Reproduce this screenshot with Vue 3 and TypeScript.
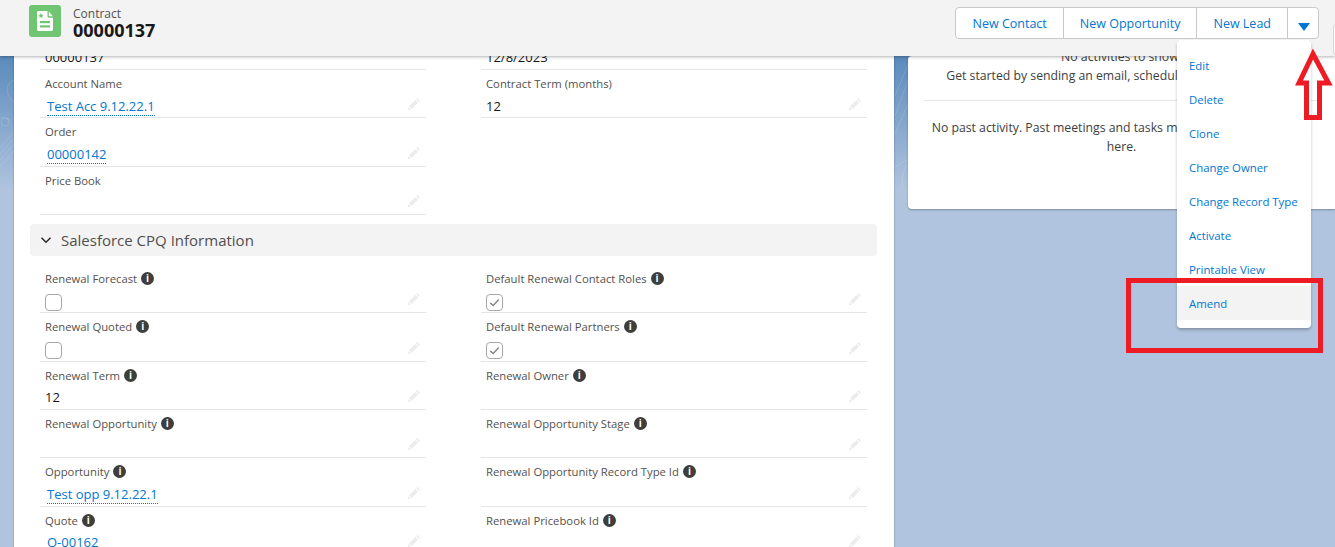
<script setup lang="ts">
interface Field {
  label: string
  value?: string
  link?: boolean
  info?: boolean
  check?: 'on' | 'off'
}

const topLeft: Field[] = [
  { label: 'Account Name', value: 'Test Acc 9.12.22.1', link: true },
  { label: 'Order', value: '00000142', link: true },
  { label: 'Price Book' },
]
const topRight: Field[] = [{ label: 'Contract Term (months)', value: '12' }]

const cpqLeft: Field[] = [
  { label: 'Renewal Forecast', info: true, check: 'off' },
  { label: 'Renewal Quoted', info: true, check: 'off' },
  { label: 'Renewal Term', info: true, value: '12' },
  { label: 'Renewal Opportunity', info: true },
  { label: 'Opportunity', info: true, value: 'Test opp 9.12.22.1', link: true },
  { label: 'Quote', info: true, value: 'Q-00162', link: true },
]
const cpqRight: Field[] = [
  { label: 'Default Renewal Contact Roles', info: true, check: 'on' },
  { label: 'Default Renewal Partners', info: true, check: 'on' },
  { label: 'Renewal Owner', info: true },
  { label: 'Renewal Opportunity Stage', info: true },
  { label: 'Renewal Opportunity Record Type Id', info: true },
  { label: 'Renewal Pricebook Id', info: true },
]

const columns = [cpqLeft, cpqRight]
const actions = ['New Contact', 'New Opportunity', 'New Lead']
const menu = ['Edit', 'Delete', 'Clone', 'Change Owner', 'Change Record Type', 'Activate', 'Printable View', 'Amend']
</script>

<template>
  <div class="page">
    <!-- faint contour lines of the page backdrop -->
    <svg class="backdrop" viewBox="0 0 908 130" width="908" height="130">
      <g fill="none" stroke="#fff" stroke-opacity="0.16" stroke-width="0.8">
        <path d="M14 24c-6 2-8 8-6 14s4 7 6 8" />
        <path d="M0 62c4-1 7 0 10 3" />
        <circle cx="5" cy="66" r="4" />
        <path d="M0 92 14 76M0 98 14 82M0 104 14 88M0 110 14 95" />
        <path d="M895 40 908 8M895 60 908 24M895 78 908 48" />
        <path d="M895 112c4-4 8-7 13-8M903 130c-2-8 0-16 5-22" />
      </g>
    </svg>

    <header class="highlights">
      <div class="record">
        <span class="record-icon">
          <svg viewBox="0 0 32 32" width="32" height="32">
            <path fill="#fff" d="M9.500 6H18.500V11c0 1 .8 1.800 1.800 1.800H24V24.200c0 1-.8 1.800-1.800 1.800H9.800c-1 0-1.800-.8-1.800-1.800V7.500C8 6.700 8.700 6 9.500 6z" />
            <path fill="#fff" d="M19.800 6.300 23.800 11.300H19.800z" />
            <path fill="#6fc572" d="m12 8 .8 1.700 1.800.2-1.300 1.200.4 1.800-1.700-.9-1.700.9.400-1.800-1.300-1.200 1.800-.2z" />
            <rect x="11" y="16" width="10" height="2.200" fill="#6fc572" />
            <rect x="11" y="20.300" width="10" height="2.200" fill="#6fc572" />
          </svg>
        </span>
        <div class="record-text">
          <div class="record-type">Contract</div>
          <div class="record-name">00000137</div>
        </div>
      </div>
      <div class="actions">
        <button v-for="a in actions" :key="a" class="action">{{ a }}</button>
        <button class="action more"><span class="caret"></span></button>
      </div>
    </header>

    <div class="layout">
      <main class="detail">
        <div class="cut-row">
          <div class="cut-cell"><span class="plain">00000137</span></div>
          <div class="cut-cell"><span class="plain">12/8/2023</span></div>
        </div>
        <div class="grid">
          <div v-for="(col, i) in [topLeft, topRight]" :key="i" class="col">
            <div v-for="f in col" :key="f.label" class="field">
              <div class="label">{{ f.label }}</div>
              <div class="value">
                <a v-if="f.link" class="link">{{ f.value }}</a>
                <span v-else class="plain">{{ f.value }}</span>
              </div>
              <svg class="pencil" viewBox="0 0 14 14" width="14" height="14">
                <path fill="#ececec" d="M10.300 1 13 3.700 11.800 4.900 9.100 2.200zM8.400 2.900l2.700 2.700-6.400 6.400L2 9.300zM1.500 10l2.500 2.500-3.200.7z" />
              </svg>
            </div>
          </div>
        </div>

        <div class="section">
          <svg viewBox="0 0 12 12" width="12" height="12">
            <path fill="none" stroke="#2b2826" stroke-width="1.500" d="M1.500 3.800 6 8.300l4.500-4.500" />
          </svg>
          <span>Salesforce CPQ Information</span>
        </div>

        <div class="grid">
          <div v-for="(col, i) in columns" :key="i" class="col">
            <div v-for="f in col" :key="f.label" class="field">
              <div class="label">
                {{ f.label }}
                <span v-if="f.info" class="info">i</span>
              </div>
              <div class="value">
                <span v-if="f.check" class="checkbox">
                  <svg v-if="f.check === 'on'" viewBox="0 0 17 17" width="17" height="17">
                    <path fill="none" stroke="#8a8a8a" stroke-width="1.600" d="M4.200 8.900 7.200 11.500 12.800 5.500" />
                  </svg>
                </span>
                <a v-else-if="f.link" class="link">{{ f.value }}</a>
                <span v-else class="plain">{{ f.value }}</span>
              </div>
              <svg class="pencil" viewBox="0 0 14 14" width="14" height="14">
                <path fill="#ececec" d="M10.300 1 13 3.700 11.800 4.900 9.100 2.200zM8.400 2.900l2.700 2.700-6.400 6.400L2 9.300zM1.500 10l2.500 2.500-3.200.7z" />
              </svg>
            </div>
          </div>
        </div>
      </main>

      <aside class="activity">
        <p class="empty">No activities to show.<br />Get started by sending an email, scheduling a task, and more.</p>
        <hr />
        <p class="past">No past activity. Past meetings and tasks marked as Done show up here.</p>
      </aside>
    </div>

    <!-- dropdown opened from the caret button -->
    <ul class="menu">
      <li v-for="m in menu" :key="m" :class="{ hover: m === 'Amend' }">{{ m }}</li>
    </ul>

    <span class="edge"></span>

    <!-- red annotations drawn on top of the screenshot -->
    <svg class="mark-arrow" viewBox="0 0 42 76" width="42" height="76">
      <path fill="none" stroke="#ed1c24" stroke-width="5" d="M21 8 36.500 37H27.500V71.500H14.500V37H7z" />
    </svg>
    <div class="mark-box"></div>
  </div>
</template>

<style scoped>
.page {
  position: relative;
  width: 1335px;
  height: 547px;
  overflow: hidden;
  background: linear-gradient(#5a8abb 56px, #b0c4df 190px);
  font-family: "Open Sans", "Noto Sans", sans-serif;
  font-size: 11.3px;
  color: #54514e;
}

.backdrop {
  position: absolute;
  left: 0;
  top: 56px;
}

.highlights {
  position: relative;
  z-index: 2;
  height: 56px;
  display: flex;
  align-items: flex-start;
  justify-content: space-between;
  box-sizing: border-box;
  padding: 7px 16px 0 29px;
  background: #f3f3f3;
  box-shadow: 0 1px 3px rgba(0, 0, 0, 0.3);
}

.record {
  display: flex;
  gap: 12px;
}

.record-icon {
  width: 32px;
  height: 32px;
  margin-top: -2px;
  border-radius: 3px;
  background: #6fc572;
}

.record-icon svg {
  display: block;
}

.record-type {
  font-size: 12px;
  line-height: 14px;
  color: #54514e;
}

.record-name {
  font-size: 18px;
  font-weight: 700;
  line-height: 19px;
  color: #181818;
}

.actions {
  display: flex;
  height: 32px;
  box-sizing: border-box;
  border: 1px solid #c9c9c9;
  border-radius: 4px;
  background: #fff;
}

.action {
  padding: 0 16px;
  border: 0;
  border-left: 1px solid #c9c9c9;
  background: none;
  font: inherit;
  font-size: 12.5px;
  color: #0176d3;
}

.action:first-child {
  border-left: 0;
  padding-left: 17px;
}

.more {
  width: 31px;
  padding: 0;
  display: flex;
  align-items: center;
  justify-content: center;
}

.caret {
  margin: 7px 0 0 1px;
  border-left: 6px solid transparent;
  border-right: 6px solid transparent;
  border-top: 8px solid #0176d3;
}

.layout {
  position: relative;
  display: flex;
  align-items: flex-start;
  gap: 14px;
  padding-left: 14px;
}

.detail {
  width: 880px;
  flex: none;
  box-sizing: border-box;
  padding: 0 16px;
  background: #fff;
  box-shadow: 0 0 2px rgba(0, 0, 0, 0.3);
}

.cut-row {
  display: flex;
  gap: 55px;
  padding: 0 10px;
  height: 13px;
  overflow: hidden;
}

.cut-cell {
  width: 386px;
  box-sizing: border-box;
  margin-top: -8px;
  padding-left: 5px;
  height: 22px;
  font-size: 13px;
}

.grid {
  display: flex;
  gap: 55px;
  padding: 0 10px;
}

.col {
  width: 386px;
  border-top: 1px solid #e5e5e5;
}

.field {
  position: relative;
  height: 42.4px;
  padding: 5px 5px 0;
  border-bottom: 1px solid #e5e5e5;
}

.label {
  display: flex;
  align-items: center;
  gap: 4px;
  height: 17px;
  line-height: 17px;
  white-space: nowrap;
}

.info {
  width: 13px;
  height: 13px;
  border-radius: 50%;
  background: #3e3e3c;
  color: #fff;
  font-size: 10px;
  font-weight: 700;
  line-height: 13px;
  text-align: center;
}

.value {
  margin-top: 3.5px;
  height: 20px;
  line-height: 20px;
  font-size: 13px;
  white-space: nowrap;
}

.link {
  margin-left: 2px;
  color: #0176d3;
  border-bottom: 1px dotted #0176d3;
}

.plain {
  color: #181818;
}

.checkbox {
  display: block;
  width: 17px;
  height: 17px;
  margin-top: 7px;
  box-sizing: border-box;
  border: 1px solid #a8a8a8;
  border-radius: 4px;
}

.checkbox svg {
  display: block;
  margin: -1px;
}

.pencil {
  position: absolute;
  right: 5px;
  bottom: 6px;
}

.section {
  margin: 9px -10px 0 0;
  width: 847px;
  height: 32px;
  display: flex;
  align-items: center;
  gap: 9px;
  box-sizing: border-box;
  padding-left: 10px;
  border-radius: 4px;
  background: #f3f3f3;
  font-size: 15px;
  color: #514f4d;
}

.section + .grid .col {
  margin-top: 8.6px;
  border-top: 0;
}

.activity {
  flex: none;
  width: 427px;
  height: 153px;
  box-sizing: border-box;
  padding: 0 16px;
  border-radius: 4px 0 0 4px;
  background: #fff;
  box-shadow: 0 1px 2px rgba(0, 0, 0, 0.3);
  text-align: center;
  font-size: 12.25px;
  line-height: 19px;
  color: #3e3e3c;
}

.activity p {
  margin: 0;
}

.activity .empty {
  margin-top: -9px;
}

.activity hr {
  margin: 15px 0 17px;
  border: 0;
  border-top: 1px solid #e5e5e5;
}

.menu {
  position: absolute;
  z-index: 3;
  left: 1177px;
  top: 40px;
  width: 134px;
  margin: 0;
  padding: 8px 0;
  list-style: none;
  border-radius: 4px;
  background: #fff;
  box-shadow: 0 2px 3px rgba(0, 0, 0, 0.25);
  font-size: 11.4px;
  color: #0176d3;
}

.menu li {
  height: 34px;
  line-height: 36px;
  padding-left: 12px;
  white-space: nowrap;
}

.menu li.hover {
  background: #f3f3f3;
}

.edge {
  position: absolute;
  z-index: 3;
  left: 1333px;
  top: 23px;
  width: 8px;
  height: 31px;
  border: 1px solid #d8d8d8;
  border-radius: 4px;
  background: #fafafa;
}

.mark-arrow {
  position: absolute;
  z-index: 4;
  left: 1292px;
  top: 46px;
  overflow: visible;
}

.mark-box {
  position: absolute;
  z-index: 4;
  left: 1126px;
  top: 278px;
  width: 197px;
  height: 75px;
  box-sizing: border-box;
  border: 5px solid #ed1c24;
}
</style>
